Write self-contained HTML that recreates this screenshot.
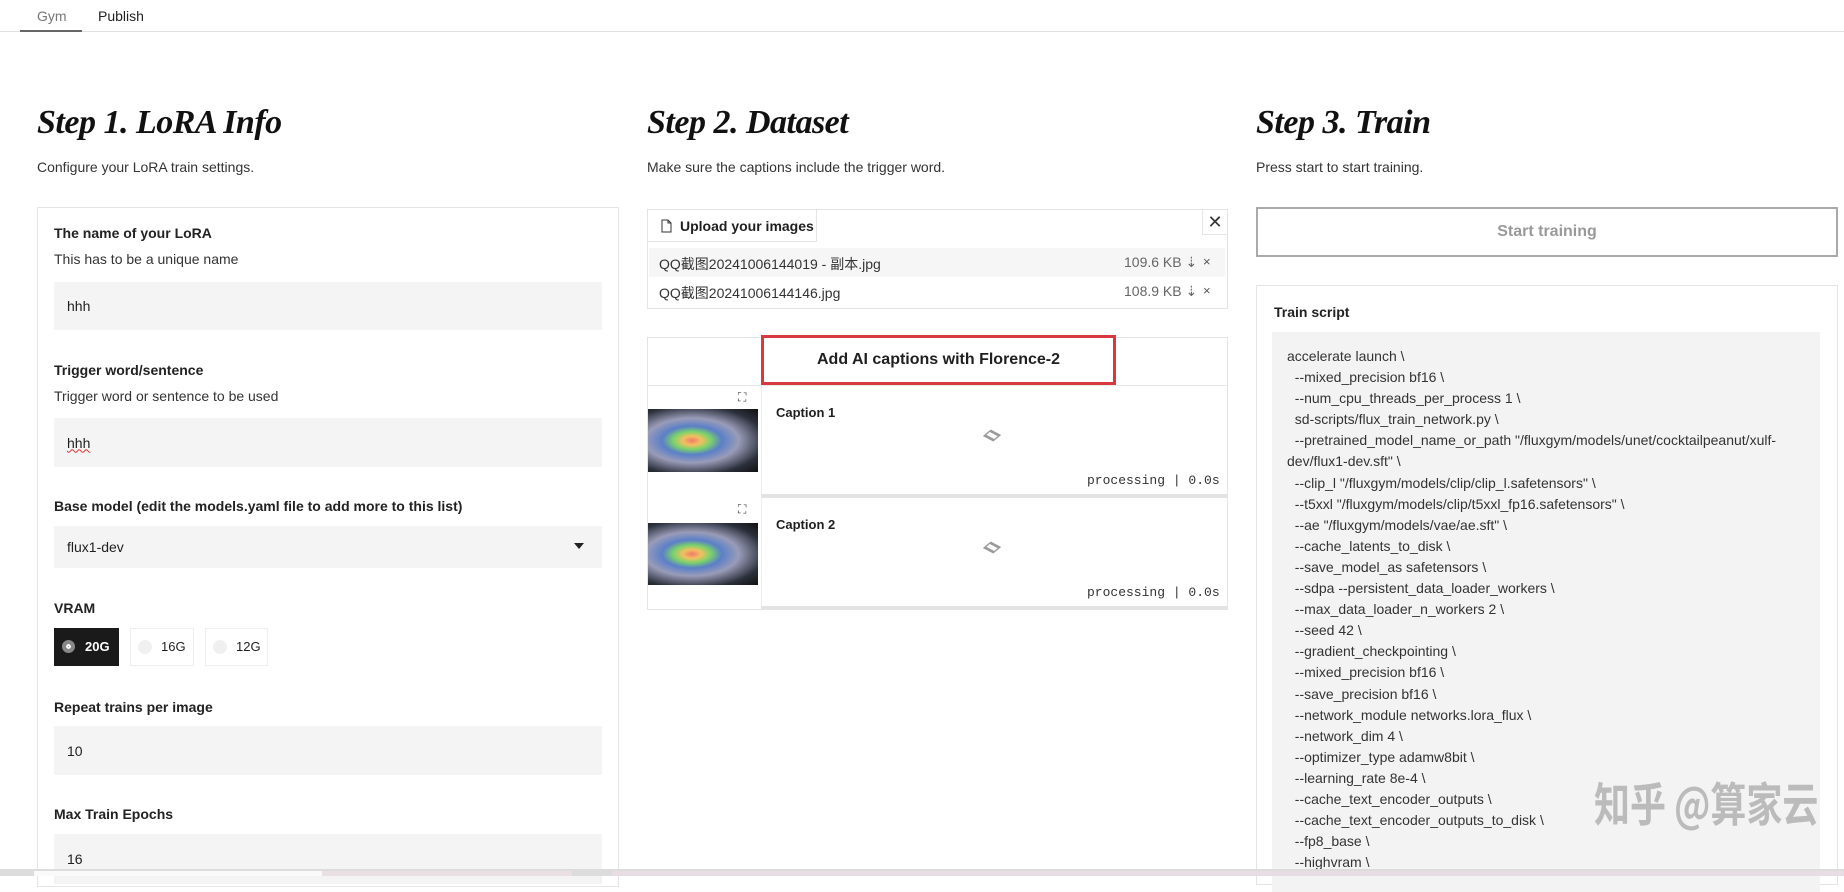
<!DOCTYPE html>
<html><head><meta charset="utf-8"><style>
*{margin:0;padding:0;box-sizing:border-box}
body{width:1844px;height:876px;overflow:hidden;background:#fff;position:relative;font-family:"Liberation Sans","Noto Sans CJK SC",sans-serif;color:#1f1f1f}
.a{position:absolute}
h1{position:absolute;font-family:"Liberation Serif",serif;font-style:italic;font-weight:bold;font-size:34px;color:#111;letter-spacing:-0.5px}
.sub{position:absolute;font-size:14px;color:#333}
.box{position:absolute;border:1px solid #e4e4e4;background:#fff}
.lbl{position:absolute;font-size:14px;font-weight:bold;color:#222}
.desc{position:absolute;font-size:14px;color:#333}
.inp{position:absolute;left:54px;width:548px;background:#f4f4f4;font-size:14px;padding-left:13px;display:flex;align-items:center}
.code{font-size:14px;line-height:21.1px;color:#333;white-space:pre-wrap}
.cap{position:absolute;font-size:13px;font-weight:bold}
.proc{position:absolute;font-family:"Liberation Mono",monospace;font-size:13px;color:#333}
.img{position:absolute;background:radial-gradient(ellipse at 40% 50%,#f07a6a 0,#f2c060 10%,#7bd36a 20%,#5a7fc8 32%,#9a9cb8 50%,#2a2f3a 78%,#111 100%);}
</style></head><body>
<div class="a" style="left:37px;top:8px;font-size:14px;color:#777">Gym</div>
<div class="a" style="left:98px;top:8px;font-size:14px;color:#222">Publish</div>
<div class="a" style="left:0;top:31px;width:1844px;height:1px;background:#e0e0e0"></div>
<div class="a" style="left:20px;top:30px;width:62px;height:2px;background:#666"></div>

<h1 style="left:37px;top:104px">Step 1. LoRA Info</h1>
<h1 style="left:647px;top:104px">Step 2. Dataset</h1>
<h1 style="left:1256px;top:104px">Step 3. Train</h1>
<div class="sub" style="left:37px;top:159px">Configure your LoRA train settings.</div>
<div class="sub" style="left:647px;top:159px">Make sure the captions include the trigger word.</div>
<div class="sub" style="left:1256px;top:159px">Press start to start training.</div>

<div class="box" style="left:37px;top:207px;width:582px;height:680px"></div>
<div class="lbl" style="left:54px;top:225px">The name of your LoRA</div>
<div class="desc" style="left:54px;top:251px">This has to be a unique name</div>
<div class="inp" style="top:282px;height:48px">hhh</div>
<div class="lbl" style="left:54px;top:362px">Trigger word/sentence</div>
<div class="desc" style="left:54px;top:388px">Trigger word or sentence to be used</div>
<div class="inp" style="top:418px;height:49px"><span style="text-decoration:underline wavy #d33;text-decoration-thickness:1px">hhh</span></div>
<div class="lbl" style="left:54px;top:498px">Base model (edit the models.yaml file to add more to this list)</div>
<div class="inp" style="top:526px;height:42px">flux1-dev<span style="position:absolute;right:18px;top:17px;border:5px solid transparent;border-top:6px solid #222"></span></div>
<div class="lbl" style="left:54px;top:600px">VRAM</div>
<div class="a" style="left:54px;top:628px;width:65px;height:38px;background:#1a1a1a;color:#fff;font-size:13px;font-weight:bold;padding:11px 0 0 31px">20G<span style="position:absolute;left:8px;top:12px;width:13px;height:13px;border-radius:50%;background:#777;border:4px solid #888;box-shadow:inset 0 0 0 2px #fff"></span></div>
<div class="a" style="left:130px;top:628px;width:64px;height:38px;border:1px solid #eee;font-size:13px;padding:10px 0 0 30px">16G<span style="position:absolute;left:7px;top:11px;width:14px;height:14px;border-radius:50%;background:#f0f0f0"></span></div>
<div class="a" style="left:205px;top:628px;width:63px;height:38px;border:1px solid #eee;font-size:13px;padding:10px 0 0 30px">12G<span style="position:absolute;left:7px;top:11px;width:14px;height:14px;border-radius:50%;background:#f0f0f0"></span></div>
<div class="lbl" style="left:54px;top:699px">Repeat trains per image</div>
<div class="inp" style="top:726px;height:49px">10</div>
<div class="lbl" style="left:54px;top:806px">Max Train Epochs</div>
<div class="inp" style="top:834px;height:50px">16</div>

<div class="box" style="left:647px;top:209px;width:581px;height:100px"></div>
<div class="a" style="left:647px;top:209px;width:170px;height:33px;border:1px solid #e4e4e4;font-size:14px;font-weight:bold;padding:8px 0 0 32px">Upload your images
<svg style="position:absolute;left:13px;top:9px" width="11" height="14" viewBox="0 0 11 14"><path d="M1 1h6l3 3v9H1z M7 1v3h3" fill="none" stroke="#333" stroke-width="1"/></svg></div>
<div class="a" style="left:1202px;top:209px;width:26px;height:26px;border:1px solid #e4e4e4;font-size:18px;text-align:center;line-height:24px;color:#333">✕</div>
<div class="a" style="left:649px;top:248px;width:576px;height:29px;background:#f6f6f6"></div>
<div class="a" style="left:659px;top:254px;font-size:14px;color:#333">QQ截图20241006144019 - 副本.jpg</div>
<div class="a" style="left:659px;top:283px;font-size:14px;color:#333">QQ截图20241006144146.jpg</div>
<div class="a" style="left:1124px;top:254px;font-size:14px;color:#666">109.6 KB ⇣</div>
<div class="a" style="left:1124px;top:283px;font-size:14px;color:#666">108.9 KB ⇣</div>
<div class="a" style="left:1203px;top:254px;font-size:13px;color:#555">×</div>
<div class="a" style="left:1203px;top:283px;font-size:13px;color:#555">×</div>

<div class="box" style="left:647px;top:337px;width:581px;height:273px"></div>
<div class="a" style="left:761px;top:335px;width:355px;height:50px;border:3px solid #d8383f;font-size:16px;font-weight:bold;text-align:center;line-height:44px">Add AI captions with Florence-2</div>
<div class="a" style="left:648px;top:385px;width:579px;height:1px;background:#e8e8e8"></div>
<div class="a" style="left:761px;top:385px;width:466px;height:111px;border-left:1px solid #eee"></div>
<div class="a" style="left:761px;top:494px;width:466px;height:4px;background:#e4e4e4"></div>
<div class="a" style="left:761px;top:497px;width:466px;height:112px;border-left:1px solid #eee"></div>
<div class="a" style="left:761px;top:606px;width:466px;height:4px;background:#e4e4e4"></div>
<div class="img" style="left:648px;top:409px;width:110px;height:63px"></div>
<div class="img" style="left:648px;top:523px;width:110px;height:62px"></div>
<div class="a" style="left:738px;top:390px;font-size:12px;color:#444">⛶</div>
<div class="a" style="left:738px;top:502px;font-size:12px;color:#444">⛶</div>
<div class="cap" style="left:776px;top:405px">Caption 1</div>
<div class="cap" style="left:776px;top:517px">Caption 2</div>
<div class="a" style="left:984px;top:432px;width:16px;height:7px;border:2px solid #999;transform:skewX(-40deg) rotate(20deg)"></div>
<div class="a" style="left:984px;top:544px;width:16px;height:7px;border:2px solid #999;transform:skewX(-40deg) rotate(20deg)"></div>
<div class="proc" style="left:1087px;top:473px">processing | 0.0s</div>
<div class="proc" style="left:1087px;top:585px">processing | 0.0s</div>

<div class="a" style="left:1256px;top:207px;width:582px;height:50px;border:2px solid #aaa;font-size:16px;font-weight:bold;color:#999;text-align:center;line-height:46px">Start training</div>
<div class="box" style="left:1256px;top:285px;width:582px;height:600px"></div>
<div class="lbl" style="left:1274px;top:304px">Train script</div>
<div class="a" style="left:1272px;top:332px;width:548px;height:560px;background:#f3f3f3;padding:14px 14px 0 15px"><div class="code">accelerate launch \
  --mixed_precision bf16 \
  --num_cpu_threads_per_process 1 \
  sd-scripts/flux_train_network.py \
  --pretrained_model_name_or_path "/fluxgym/models/unet/cocktailpeanut/xulf-dev/flux1-dev.sft" \
  --clip_l "/fluxgym/models/clip/clip_l.safetensors" \
  --t5xxl "/fluxgym/models/clip/t5xxl_fp16.safetensors" \
  --ae "/fluxgym/models/vae/ae.sft" \
  --cache_latents_to_disk \
  --save_model_as safetensors \
  --sdpa --persistent_data_loader_workers \
  --max_data_loader_n_workers 2 \
  --seed 42 \
  --gradient_checkpointing \
  --mixed_precision bf16 \
  --save_precision bf16 \
  --network_module networks.lora_flux \
  --network_dim 4 \
  --optimizer_type adamw8bit \
  --learning_rate 8e-4 \
  --cache_text_encoder_outputs \
  --cache_text_encoder_outputs_to_disk \
  --fp8_base \
  --highvram \</div></div>
<div class="a" style="left:1594px;top:772px;font-size:36px;line-height:46px;font-weight:bold;color:rgba(150,150,150,0.6);font-family:'Noto Sans CJK SC',sans-serif;white-space:nowrap;transform:scaleY(1.3);transform-origin:top left">知乎 @算家云</div>

<div class="a" style="left:0;top:869px;width:1844px;height:7px;background:#dcdcdc"></div>
<div class="a" style="left:34px;top:871px;width:288px;height:5px;background:#fafafa"></div>
<div class="a" style="left:322px;top:871px;width:250px;height:5px;background:#eadfe3"></div>
<div class="a" style="left:612px;top:871px;width:1232px;height:5px;background:#e8dde2"></div>
</body></html>
